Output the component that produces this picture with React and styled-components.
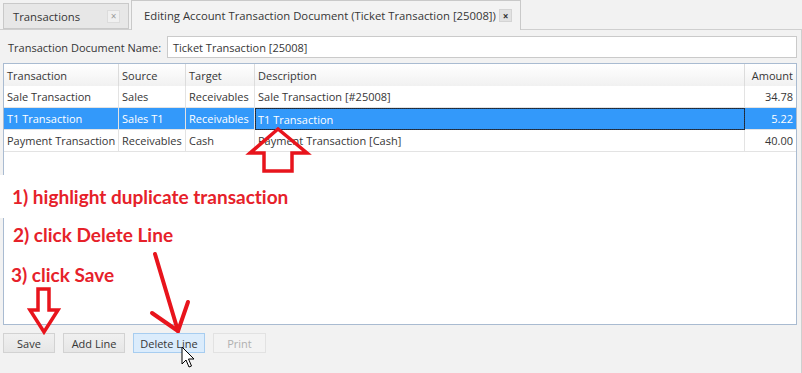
import React from "react";
import styled, { createGlobalStyle } from "styled-components";

const Global = createGlobalStyle`
  html, body { margin: 0; padding: 0; background: #f2f2f2; }
  body { font-family: "Open Sans", "Noto Sans", sans-serif; font-size: 11px; color: #363636; }
`;

const Page = styled.div`
  position: relative;
  width: 802px;
  height: 373px;
  overflow: hidden;
  background: #f2f2f2;
`;

const TabStrip = styled.div`
  display: flex;
  align-items: flex-end;
  height: 30px;
  padding-left: 3px;
  border-bottom: 1px solid #cfcfcf;
  box-sizing: border-box;
`;

const Tab = styled.div`
  display: flex;
  align-items: center;
  box-sizing: border-box;
  height: ${(p) => (p.$active ? "30px" : "26px")};
  width: ${(p) => p.$w}px;
  padding: 0 8px 0 ${(p) => (p.$active ? 12 : 9)}px;
  margin-right: 2px;
  margin-bottom: ${(p) => (p.$active ? "-1px" : "0")};
  background: ${(p) => (p.$active ? "#f3f3f3" : "#e7e7e7")};
  border: 1px solid #c9c9c9;
  border-bottom: ${(p) => (p.$active ? "none" : "1px solid #c9c9c9")};
  font-size: 11.3px;
  color: #363636;
  white-space: nowrap;
`;

const TabLabel = styled.span`
  flex: 1;
`;

const CloseBox = styled.span`
  display: inline-flex;
  align-items: center;
  justify-content: center;
  width: 13px;
  height: 13px;
  box-sizing: border-box;
  border: 1px solid ${(p) => (p.$active ? "#d4d4d4" : "#dcdcdc")};
  background: ${(p) => (p.$active ? "#e2e2e2" : "#f0f0f0")};
  color: ${(p) => (p.$active ? "#333" : "#9a9a9a")};
  font-size: 10px;
  font-weight: ${(p) => (p.$active ? 700 : 400)};
  line-height: 1;
`;

const Body = styled.div`
  border-right: 1px solid #cfcfcf;
  height: 343px;
  box-sizing: border-box;
  padding: 6px 4px 0 3px;
  display: flex;
  flex-direction: column;
`;

const NameRow = styled.div`
  display: flex;
  align-items: center;
  height: 22px;
  gap: 5px;
  padding-left: 5px;
`;

const Label = styled.span`
  white-space: nowrap;
  width: 154px;
`;

const TextBox = styled.div`
  flex: 1;
  height: 22px;
  box-sizing: border-box;
  border: 1px solid #cacaca;
  background: #fff;
  display: flex;
  align-items: center;
  padding-left: 5px;
`;

const Grid = styled.div`
  margin-top: 5px;
  height: 262px;
  box-sizing: border-box;
  border: 1px solid #a9bbd1;
  background: #fff;
  display: grid;
  grid-template-columns: 115px 67px 69px 490px 1fr;
  grid-auto-rows: 22px;
  align-content: start;
`;

const Head = styled.div`
  display: flex;
  align-items: center;
  justify-content: ${(p) => (p.$right ? "flex-end" : "flex-start")};
  padding: 0 3px;
  background: linear-gradient(#ffffff, #f1f1f1);
  border-right: ${(p) => (p.$last ? "none" : "1px solid #dcdcdc")};
  white-space: nowrap;
  overflow: hidden;
`;

const Cell = styled.div`
  display: flex;
  align-items: center;
  justify-content: ${(p) => (p.$right ? "flex-end" : "flex-start")};
  padding: 0 3px;
  box-sizing: border-box;
  white-space: nowrap;
  overflow: hidden;
  border-bottom: 1px solid #e3e3e3;
  border-right: ${(p) => (p.$last ? "none" : "1px solid #e3e3e3")};
  background: ${(p) => (p.$sel ? "#3399fa" : "#fff")};
  color: ${(p) => (p.$sel ? "#fff" : "#363636")};
  outline: ${(p) => (p.$focus ? "1px dotted #1d2a3a" : "none")};
  outline-offset: -1px;
  ${(p) => (p.$focus ? "border: 1px solid #26364c; padding-left: 2px;" : "")}
`;

const Buttons = styled.div`
  display: flex;
  gap: 8px;
  margin-top: 8px;
`;

const Button = styled.div`
  height: 20px;
  box-sizing: border-box;
  display: flex;
  align-items: center;
  justify-content: center;
  width: ${(p) => p.$w}px;
  border: 1px solid ${(p) => (p.$hover ? "#a7cdf0" : p.$disabled ? "#e2e2e2" : "#d2d2d2")};
  background: ${(p) =>
    p.$hover ? "#dbecfc" : p.$disabled ? "#f3f3f3" : "linear-gradient(#f0f0f0, #e6e6e6)"};
  color: ${(p) => (p.$disabled ? "#b0b0b0" : "#363636")};
`;

const Note = styled.div`
  position: absolute;
  left: ${(p) => p.$x}px;
  top: ${(p) => p.$y}px;
  font-family: "Lato", "Open Sans", sans-serif;
  font-weight: 700;
  font-size: 19px;
  font-variant-ligatures: none;
  line-height: 24px;
  color: #e6212a;
  white-space: nowrap;
  background: ${(p) => (p.$bg ? "#fff" : "transparent")};
  padding: ${(p) => (p.$bg ? "10px 8px 9px 12px" : "0")};
  margin-left: ${(p) => (p.$bg ? "-12px" : "0")};
`;

const Overlay = styled.svg`
  position: absolute;
  left: 0;
  top: 0;
  pointer-events: none;
`;

const rows = [
  ["Sale Transaction", "Sales", "Receivables", "Sale Transaction [#25008]", "34.78"],
  ["T1 Transaction", "Sales T1", "Receivables", "T1 Transaction", "5.22"],
  ["Payment Transaction", "Receivables", "Cash", "Payment Transaction [Cash]", "40.00"],
];

const heads = ["Transaction", "Source", "Target", "Description", "Amount"];

export default function App() {
  return (
    <Page>
      <Global />
      <TabStrip>
        <Tab $w={126}>
          <TabLabel>Transactions</TabLabel>
          <CloseBox>×</CloseBox>
        </Tab>
        <Tab $active $w={390}>
          <TabLabel>Editing Account Transaction Document (Ticket Transaction [25008])</TabLabel>
          <CloseBox $active>×</CloseBox>
        </Tab>
      </TabStrip>
      <Body>
        <NameRow>
          <Label>Transaction Document Name:</Label>
          <TextBox>Ticket Transaction [25008]</TextBox>
        </NameRow>
        <Grid>
          {heads.map((h, i) => (
            <Head key={h} $right={i === 4} $last={i === 4}>{h}</Head>
          ))}
          {rows.map((r, ri) =>
            r.map((c, ci) => (
              <Cell
                key={ri + "-" + ci}
                $right={ci === 4}
                $last={ci === 4}
                $sel={ri === 1}
                $focus={ri === 1 && ci === 3}
              >
                {c}
              </Cell>
            ))
          )}
        </Grid>
        <Buttons>
          <Button $w={52}>Save</Button>
          <Button $w={62}>Add Line</Button>
          <Button $w={72} $hover>Delete Line</Button>
          <Button $w={53} $disabled>Print</Button>
        </Buttons>
      </Body>

      <Note $x={12} $y={175} $bg>1) highlight duplicate transaction</Note>
      <Note $x={13} $y={223}>2) click Delete Line</Note>
      <Note $x={11} $y={263}>3) click Save</Note>

      <Overlay width="802" height="373" viewBox="0 0 802 373">
        <g fill="none" stroke="#e8141c" strokeWidth="3.5" strokeLinejoin="miter">
          <polygon points="278,129 250,153 264,153 264,171 292,171 292,153 307,153" />
          <polygon points="38,289 49,289 49,310 58,310 44,332 30,310 38,310" />
        </g>
        <g stroke="#e8141c" strokeWidth="4" strokeLinecap="round" fill="none">
          <line x1="155" y1="254" x2="178" y2="331" />
          <line x1="152" y1="313" x2="178" y2="331" />
          <line x1="188" y1="302" x2="178" y2="331" />
        </g>
        <path
          d="M182 347 L182 364 L186 360 L189 367 L191.5 366 L188.5 359 L194 359 Z"
          fill="#fff"
          stroke="#000"
          strokeWidth="1"
          strokeLinejoin="miter"
        />
      </Overlay>
    </Page>
  );
}
